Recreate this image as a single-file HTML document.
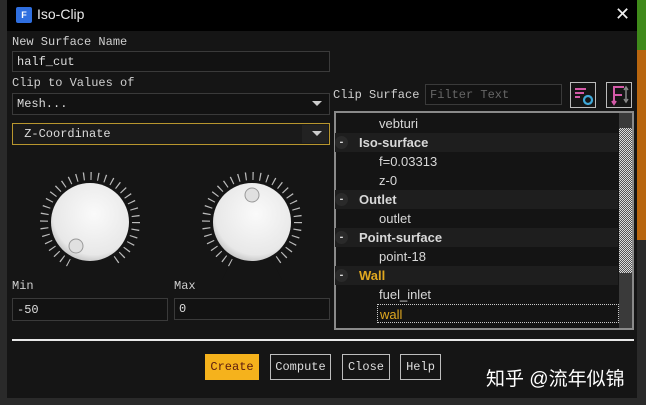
<!DOCTYPE html>
<html><head><meta charset="utf-8"><style>
*{margin:0;padding:0;box-sizing:border-box}
body{width:646px;height:405px;background:#2a2a2a;position:relative;overflow:hidden;font-family:"Liberation Mono","Noto Sans CJK SC",monospace;font-size:12px;color:#d0d0d0}
.a{position:absolute}
.win{left:7px;top:0;width:630px;height:398px;background:#151515}
.title{left:7px;top:0;width:630px;height:31px;background:#000}
.inp{position:absolute;border:1px solid #3a3a3a;background:#121212;padding-left:4px;line-height:20px;color:#ddd}
.lbl{position:absolute;color:#cfcfcf}
.btn{position:absolute;border:1px solid #bdbdbd;color:#ddd;text-align:center;line-height:24px;height:26px}
.row{position:absolute;left:335px;width:283px;height:19px;line-height:19px;font-family:"Liberation Sans",sans-serif;font-size:13px;color:#d8d8d8}
.grp{background:#1e1e1e;font-weight:bold}
.grp span{position:absolute;left:0;top:3px;width:13px;height:13px;border-radius:7px;background:#2a2a2a;color:#ddd;font-size:11px;text-align:center;line-height:12px}
</style></head><body>
<div class="a" style="left:637px;top:0;width:9px;height:50px;background:#3f8a1a"></div>
<div class="a" style="left:637px;top:50px;width:9px;height:190px;background:#b8660f"></div>
<div class="a win"></div>
<div class="a title"></div>
<div class="a" style="left:16px;top:7px;width:16px;height:16px;background:#2f6fe0;border-radius:2px;color:#fff;font:bold 9px 'Liberation Sans',sans-serif;text-align:center;line-height:16px">F</div>
<div class="a" style="left:37px;top:6px;color:#e8e8e8;font:14px 'Liberation Sans',sans-serif">Iso-Clip</div>
<div class="a" style="left:615px;top:4px;color:#eee;font:18px 'Liberation Sans',sans-serif">✕</div>

<div class="lbl" style="left:12px;top:35px">New Surface Name</div>
<div class="inp" style="left:12px;top:51px;width:318px;height:21px">half_cut</div>
<div class="lbl" style="left:12px;top:76px">Clip to Values of</div>
<div class="inp" style="left:12px;top:93px;width:318px;height:22px;line-height:21px">Mesh...</div>
<div class="a" style="left:312px;top:101px;border:5px solid transparent;border-top:5px solid #ccc;border-bottom:0"></div>
<div class="inp" style="left:12px;top:123px;width:318px;height:22px;line-height:20px;border-color:#b8962e;background:#1a1a1a">&nbsp;Z-Coordinate</div>
<div class="a" style="left:302px;top:125px;width:26px;height:18px;background:#222"></div>
<div class="a" style="left:312px;top:131px;border:5px solid transparent;border-top:5px solid #ccc;border-bottom:0"></div>

<svg class="a" style="left:0;top:160px" width="340" height="130">
<defs><radialGradient id="g" cx="0.55" cy="0.4" r="0.65"><stop offset="0" stop-color="#fafafa"/><stop offset="0.8" stop-color="#e8e8e8"/><stop offset="1" stop-color="#bbb"/></radialGradient></defs>
<g stroke="#bbb" fill="none">
<circle cx="90" cy="62" r="46" stroke-width="8" stroke-dasharray="1.2 6.03"/>
<circle cx="252" cy="62" r="46" stroke-width="8" stroke-dasharray="1.2 6.03"/>
</g>
<polygon points="90,62 60,120 120,120" fill="#151515"/>
<polygon points="252,62 222,120 282,120" fill="#151515"/>
<circle cx="90" cy="62" r="39" fill="url(#g)"/>
<circle cx="252" cy="62" r="39" fill="url(#g)"/>
<circle cx="76" cy="86" r="7" fill="#e0e0e0" stroke="#999"/>
<circle cx="252" cy="35" r="7" fill="#e0e0e0" stroke="#999"/>
</svg>

<div class="lbl" style="left:12px;top:279px">Min</div>
<div class="lbl" style="left:174px;top:279px">Max</div>
<div class="inp" style="left:12px;top:298px;width:156px;height:23px;line-height:22px">-50</div>
<div class="inp" style="left:174px;top:298px;width:156px;height:22px">0</div>

<div class="lbl" style="left:333px;top:88px">Clip Surface</div>
<div class="inp" style="left:425px;top:84px;width:137px;height:21px;color:#666">Filter Text</div>
<div class="a" style="left:570px;top:82px;width:26px;height:26px;border:1px solid #bbb"></div>
<svg class="a" style="left:570px;top:82px" width="26" height="26"><g stroke="#d45aa8" stroke-width="2"><line x1="5" y1="7" x2="16" y2="7"/><line x1="5" y1="11" x2="14" y2="11"/><line x1="5" y1="15" x2="10" y2="15"/></g><circle cx="18" cy="18" r="4" fill="none" stroke="#3fa8d8" stroke-width="2.2"/></svg>
<div class="a" style="left:606px;top:82px;width:26px;height:26px;border:1px solid #bbb"></div>
<svg class="a" style="left:606px;top:82px" width="26" height="26"><g stroke="#d45aa8" stroke-width="2" fill="none"><path d="M8 22V5h10M8 13h8"/><path d="M6 19l2 3 2-3"/></g><g stroke="#888" stroke-width="1.5" fill="none"><path d="M20 5v15M18 8l2-3 2 3M18 17l2 3 2-3"/></g></svg>

<div class="a" style="left:334px;top:111px;width:300px;height:219px;border:2px solid #8a8a8a;background:#141414"></div>
<div class="a" style="left:619px;top:113px;width:13px;height:215px;background:#3a3a3a"></div>
<div class="a" style="left:619px;top:128px;width:13px;height:145px;background:repeating-conic-gradient(#ddd 0 25%,#555 0 50%) 0 0/2px 2px"></div>
<div class="row" style="top:114px;padding-left:44px">vebturi</div>
<div class="row grp" style="top:133px;padding-left:24px"><span>-</span>Iso-surface</div>
<div class="row" style="top:152px;padding-left:44px">f=0.03313</div>
<div class="row" style="top:171px;padding-left:44px">z-0</div>
<div class="row grp" style="top:190px;padding-left:24px"><span>-</span>Outlet</div>
<div class="row" style="top:209px;padding-left:44px">outlet</div>
<div class="row grp" style="top:228px;padding-left:24px"><span>-</span>Point-surface</div>
<div class="row" style="top:247px;padding-left:44px">point-18</div>
<div class="row grp" style="top:266px;padding-left:24px;color:#e0a820"><span>-</span>Wall</div>
<div class="row" style="top:285px;padding-left:44px">fuel_inlet</div>
<div class="row" style="top:304px;left:377px;width:242px;padding-left:2px;color:#e0a820;border:1px dotted #ccc">wall</div>

<div class="a" style="left:12px;top:339px;width:622px;height:2px;background:#e8e8e8"></div>
<div class="btn" style="left:205px;top:354px;width:54px;background:#f5b21c;border-color:#f5b21c;color:#5a1a10">Create</div>
<div class="btn" style="left:270px;top:354px;width:61px">Compute</div>
<div class="btn" style="left:342px;top:354px;width:48px">Close</div>
<div class="btn" style="left:400px;top:354px;width:41px">Help</div>
<div class="a" style="left:486px;top:364px;color:#fff;font:19px 'Liberation Sans','Noto Sans CJK SC',sans-serif">知乎 @流年似锦</div>
</body></html>
